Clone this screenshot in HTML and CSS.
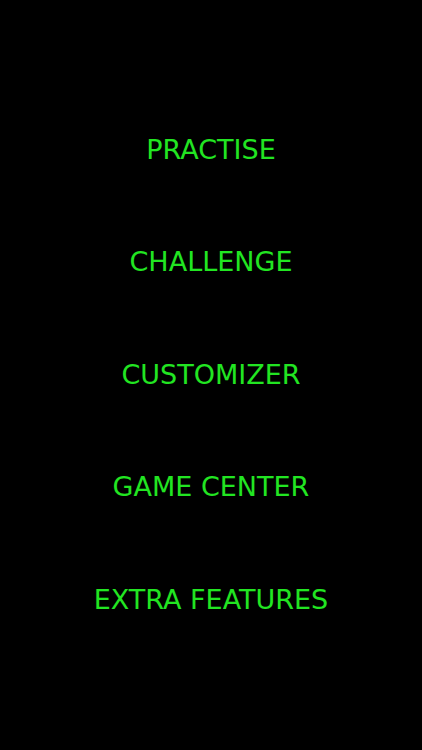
FILE: index.html
```html
<!DOCTYPE html>
<html>
<head>
<meta charset="utf-8">
<link rel="stylesheet" href="styles.css">
</head>
<body>
<nav class="menu">
  <div class="item">PRACTISE</div>
  <div class="item">CHALLENGE</div>
  <div class="item">CUSTOMIZER</div>
  <div class="item">GAME CENTER</div>
  <div class="item">EXTRA FEATURES</div>
</nav>
</body>
</html>
```
FILE: styles.css
```css
html, body {
  margin: 0;
  padding: 0;
  background: #000;
  width: 422px;
  height: 750px;
  overflow: hidden;
}
.menu {
  display: flex;
  flex-direction: column;
  padding-top: 93px;
}
.item {
  height: 112.5px;
  display: flex;
  align-items: center;
  justify-content: center;
  font-family: "DejaVu Sans", sans-serif;
  font-size: 27px;
  line-height: 1;
  color: #22e522;
}
```
